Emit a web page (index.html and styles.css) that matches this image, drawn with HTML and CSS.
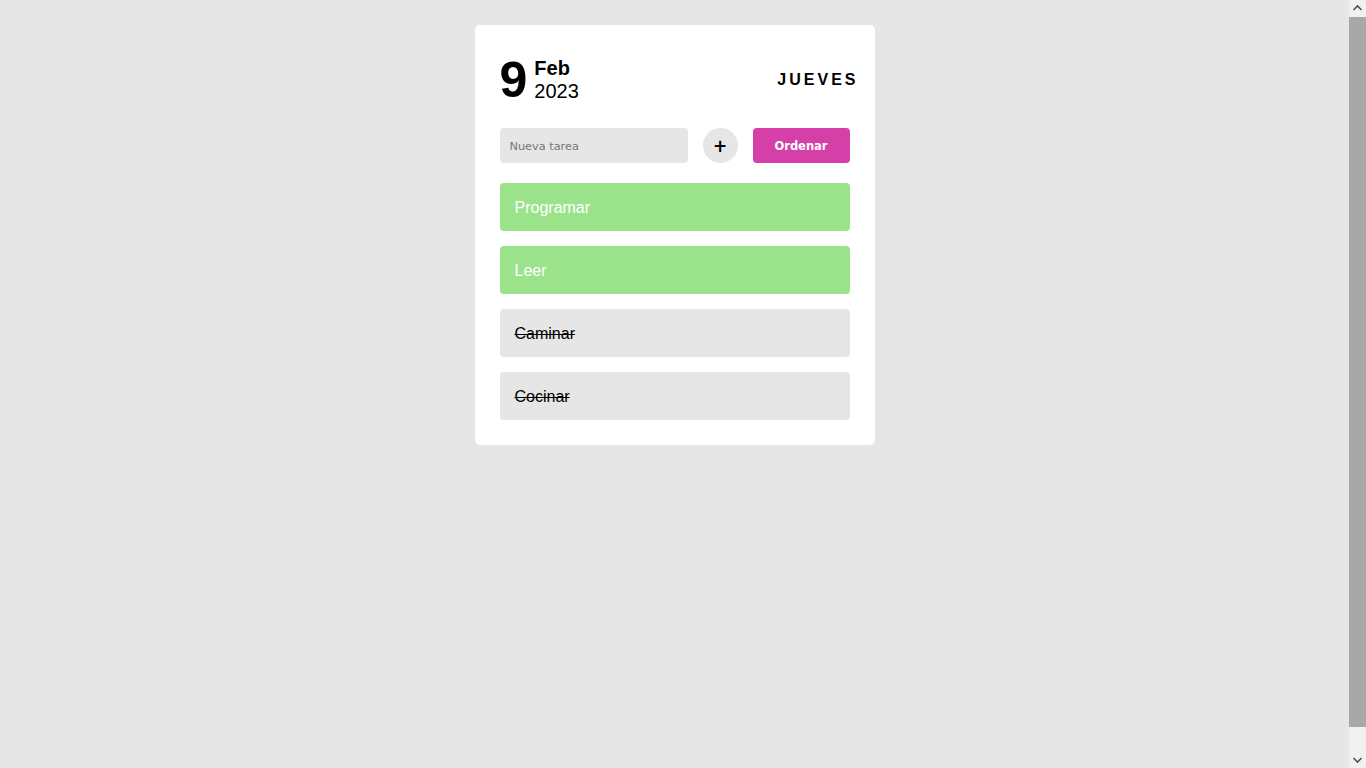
FILE: index.html
```html
<!DOCTYPE html>
<html lang="es">
<head>
<meta charset="utf-8">
<title>Tareas</title>
<link rel="stylesheet" href="styles.css">
</head>
<body>
  <main class="card">
    <header class="header">
      <div class="date">
        <span class="day">9</span>
        <div class="month-year">
          <span class="month">Feb</span>
          <span class="year">2023</span>
        </div>
      </div>
      <div class="weekday">JUEVES</div>
    </header>
    <form class="new-task" onsubmit="return false">
      <input class="task-input" type="text" placeholder="Nueva tarea">
      <button class="add-btn" type="button">+</button>
      <button class="sort-btn" type="button">Ordenar</button>
    </form>
    <ul class="tasks">
      <li class="task task-pending">Programar</li>
      <li class="task task-pending">Leer</li>
      <li class="task task-done">Caminar</li>
      <li class="task task-done">Cocinar</li>
    </ul>
  </main>
  <div class="scrollbar" aria-hidden="true">
    <div class="sb-btn">
      <svg width="17" height="17" viewBox="0 0 17 17"><path d="M4.5 10 L8.5 6 L12.5 10" fill="none" stroke="#505050" stroke-width="1.6"/></svg>
    </div>
    <div class="sb-track"><div class="sb-thumb"></div></div>
    <div class="sb-btn">
      <svg width="17" height="17" viewBox="0 0 17 17"><path d="M4.5 7 L8.5 11 L12.5 7" fill="none" stroke="#505050" stroke-width="1.6"/></svg>
    </div>
  </div>
</body>
</html>
```

FILE: styles.css
```css
html {
  background: #e6e6e6;
}

body {
  margin: 0;
  padding: 25px 17px 0 0;
  height: 100vh;
  background: #e6e6e6;
  font-family: "Liberation Sans", Arial, sans-serif;
  color: #000;
}

.scrollbar {
  position: fixed;
  top: 0;
  right: 0;
  width: 17px;
  height: 100vh;
  display: flex;
  flex-direction: column;
  background: #f1f1f1;
}

.sb-btn {
  height: 17px;
  flex: none;
}

.sb-btn svg {
  display: block;
}

.sb-track {
  flex: 1;
  padding-bottom: 24px;
  display: flex;
}

.sb-thumb {
  flex: 1;
  background: #a8a8a8;
}

.card {
  box-sizing: border-box;
  width: 400px;
  margin: 0 auto;
  padding: 25px;
  background: #fff;
  border-radius: 5px;
}

.header {
  display: flex;
  justify-content: space-between;
  align-items: center;
  height: 60px;
  margin: 0 -9px 18px 0;
}

.date {
  display: flex;
  align-items: center;
  gap: 7px;
}

.day {
  font-size: 50px;
  font-weight: bold;
}

.month-year {
  display: flex;
  flex-direction: column;
  font-size: 20px;
}

.month {
  font-weight: bold;
}

.weekday {
  font-size: 16px;
  font-weight: bold;
  letter-spacing: 3px;
}

.new-task {
  display: flex;
  gap: 15px;
  height: 35px;
  margin: 0 0 20px;
}

.task-input {
  box-sizing: border-box;
  width: 188px;
  height: 35px;
  padding: 1px 10px 0;
  border: none;
  border-radius: 4px;
  background: #e6e6e6;
  font-family: "DejaVu Sans", sans-serif;
  font-size: 11.3px;
  color: #000;
  outline: none;
}

.task-input::placeholder {
  color: #757575;
}

.add-btn {
  width: 35px;
  height: 35px;
  padding: 1px 0 0;
  border: none;
  border-radius: 50%;
  background: #e6e6e6;
  font-family: "DejaVu Sans", sans-serif;
  font-size: 17px;
  font-weight: bold;
  color: #000;
}

.sort-btn {
  width: 97px;
  height: 35px;
  padding: 1px 0 0;
  border: none;
  border-radius: 4px;
  background: #d53fa8;
  color: #fff;
  font-family: "DejaVu Sans", sans-serif;
  font-size: 11.5px;
  font-weight: bold;
}

.tasks {
  list-style: none;
  margin: 0;
  padding: 0;
  display: flex;
  flex-direction: column;
  gap: 15px;
}

.task {
  box-sizing: border-box;
  height: 48px;
  padding: 1px 15px 0;
  display: flex;
  align-items: center;
  border-radius: 4px;
  font-size: 16px;
}

.task-pending {
  background: #9be38b;
  color: #fff;
}

.task-done {
  background: #e6e6e6;
  color: #000;
  text-decoration: line-through;
}
```
